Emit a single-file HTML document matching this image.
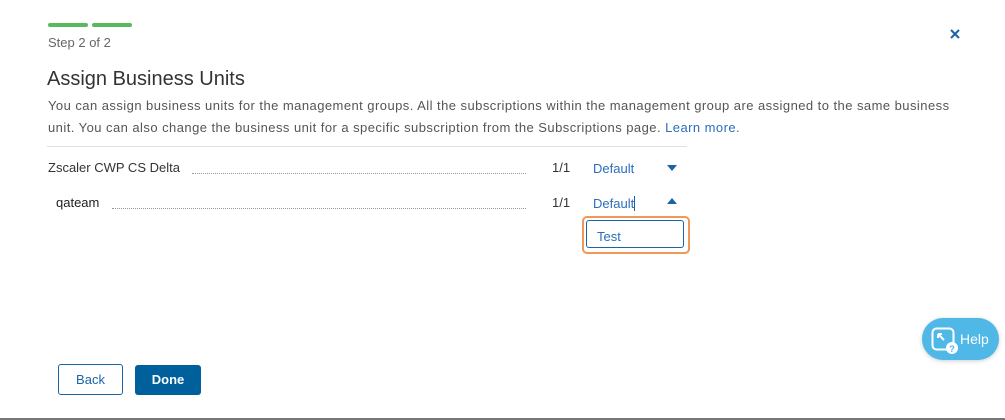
<!DOCTYPE html>
<html><head><style>
body{margin:0;width:1005px;height:420px;background:#fff;font-family:"Liberation Sans",sans-serif;position:relative;overflow:hidden}
.a{position:absolute}
.bar{top:23px;height:4px;width:40px;background:#5cb85c;border-radius:2px}
.t{font-size:13px;color:#333}
.dots{border-bottom:1px dotted #999;height:0}
.bl{color:#2a6ebb;font-size:13px}
</style></head><body>
<div class="a bar" style="left:48px"></div>
<div class="a bar" style="left:92px"></div>
<div class="a" style="left:48px;top:35px;font-size:13px;color:#666">Step 2 of 2</div>
<svg class="a" style="left:950px;top:29px" width="10" height="10"><path d="M1 1L9 9M9 1L1 9" stroke="#1a64a6" stroke-width="2"/></svg>
<div class="a" style="left:47px;top:68px;font-size:20px;color:#333">Assign Business Units</div>
<div class="a" style="left:48px;top:95px;width:950px;white-space:nowrap;font-size:13px;line-height:22px;color:#555;letter-spacing:0.45px">You can assign business units for the management groups. All the subscriptions within the management group are assigned to the same business<br>unit. You can also change the business unit for a specific subscription from the Subscriptions page. <span style="color:#2a6ebb">Learn more.</span></div>
<div class="a" style="left:47px;top:146px;width:640px;height:1px;background:#e0e0e0"></div>
<div class="a t" style="left:48px;top:160px">Zscaler CWP CS Delta</div>
<div class="a dots" style="left:192px;top:173px;width:334px"></div>
<div class="a t" style="left:552px;top:160px">1/1</div>
<div class="a bl" style="left:593px;top:161px">Default</div>
<svg class="a" style="left:667px;top:165px" width="10" height="6"><path d="M0 0H10L5 6Z" fill="#1a64a6"/></svg>
<div class="a t" style="left:56px;top:195px;color:#222">qateam</div>
<div class="a dots" style="left:112px;top:208px;width:414px"></div>
<div class="a t" style="left:552px;top:195px">1/1</div>
<div class="a bl" style="left:593px;top:196px">Default<span style="display:inline-block;width:1px;height:15px;background:#1a64a6;vertical-align:-3px"></span></div>
<svg class="a" style="left:667px;top:198px" width="10" height="6"><path d="M0 6H10L5 0Z" fill="#1a64a6"/></svg>
<div class="a" style="left:582px;top:216px;width:104px;height:34px;border:2px solid #f0985a;border-radius:5px"></div>
<div class="a" style="left:586px;top:220px;width:98px;height:28px;border:1px solid #1a64a6;border-radius:3px;box-sizing:border-box"></div>
<div class="a bl" style="left:597px;top:229px">Test</div>
<div class="a" style="left:922px;top:318px;width:77px;height:42px;background:#4fb8e6;border-radius:21px;box-shadow:0 1px 4px rgba(0,0,0,.2)"></div>
<svg class="a" style="left:931px;top:327px" width="28" height="28"><rect x="1.5" y="1.5" width="21" height="21" rx="4" fill="none" stroke="#fff" stroke-width="2"/><path d="M7 7L13 13M7 7H11M7 7V11" stroke="#fff" stroke-width="2" fill="none"/><circle cx="21" cy="21" r="6" fill="#fff"/><text x="21" y="25" font-size="9" font-weight="bold" text-anchor="middle" fill="#4fb8e6" font-family="Liberation Sans">?</text></svg>
<div class="a" style="left:960px;top:331px;font-size:14px;color:#fff">Help</div>
<div class="a" style="left:58px;top:364px;width:65px;height:31px;border:1px solid #1a64a6;border-radius:3px;box-sizing:border-box;text-align:center;line-height:29px;font-size:13px;color:#1a64a6">Back</div>
<div class="a" style="left:135px;top:365px;width:66px;height:30px;background:#00609c;border-radius:3px;text-align:center;line-height:30px;font-size:13px;font-weight:bold;color:#fff">Done</div>
<div class="a" style="left:0;top:418px;width:1005px;height:2px;background:#777"></div>
</body></html>
